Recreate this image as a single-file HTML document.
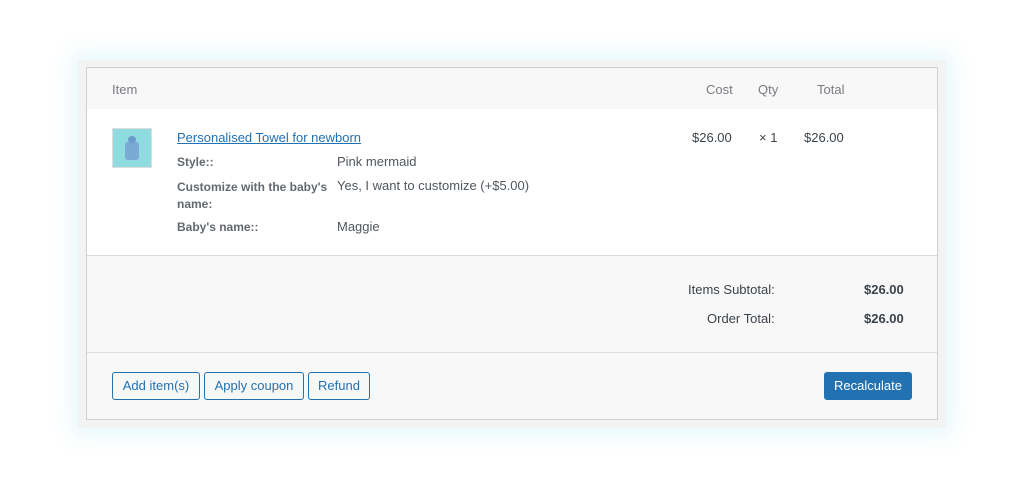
<!DOCTYPE html>
<html><head><style>
body{margin:0;width:1024px;height:494px;background:#fff;font-family:"Liberation Sans",Arial,sans-serif;position:relative;overflow:hidden;color:#50575e;font-size:13px}
.glow{position:absolute;left:78px;top:60px;width:868px;height:368px;background:#f3f3f3;box-shadow:0 0 22px 6px rgba(190,238,242,.4)}
.box{position:absolute;left:86px;top:67px;width:850px;height:351px;border:1px solid #d0d0d0;background:#f8f8f8}
.t{position:absolute;white-space:nowrap}
.white{position:absolute;left:0;top:41px;width:850px;height:146px;background:#fff;border-bottom:1px solid #dcdcde}
.line2{position:absolute;left:0;top:284px;width:850px;border-top:1px solid #dcdcde}
.btn{position:absolute;top:304px;height:26px;border:1px solid #2271b1;border-radius:3px;color:#2271b1;background:#f6f7f7;line-height:26px;text-align:center;font-size:13px;box-sizing:content-box}
b{color:#646970}
</style></head><body>
<div class="glow"></div>
<div class="box">
 <div class="t" style="left:25px;top:14px;color:#787c82">Item</div>
 <div class="t" style="left:619px;top:14px;color:#787c82">Cost</div>
 <div class="t" style="left:671px;top:14px;color:#787c82">Qty</div>
 <div class="t" style="left:730px;top:14px;color:#787c82">Total</div>
 <div class="white">
  <div style="position:absolute;left:25px;top:19px;width:38px;height:38px;background:#8edbe0;border:1px solid #ddd"><div style="position:absolute;left:12px;top:13px;width:14px;height:18px;background:#7aa9d6;border-radius:3px"></div><div style="position:absolute;left:15px;top:7px;width:8px;height:7px;background:#6b9ac8;border-radius:50%"></div></div>
  <div class="t" style="left:90px;top:21px;color:#2271b1;text-decoration:underline">Personalised Towel for newborn</div>
  <div class="t" style="left:90px;top:46px;font-size:12px"><b>Style::</b></div>
  <div class="t" style="left:250px;top:45px">Pink mermaid</div>
  <div class="t" style="left:90px;top:70px;font-size:12px;line-height:17px"><b>Customize with the baby's<br>name:</b></div>
  <div class="t" style="left:250px;top:69px">Yes, I want to customize (+$5.00)</div>
  <div class="t" style="left:90px;top:111px;font-size:12px"><b>Baby's name::</b></div>
  <div class="t" style="left:250px;top:110px">Maggie</div>
  <div class="t" style="left:605px;top:21px;color:#3c434a">$26.00</div>
  <div class="t" style="left:672px;top:21px;color:#3c434a">× 1</div>
  <div class="t" style="left:717px;top:21px;color:#3c434a">$26.00</div>
 </div>
 <div class="t" style="left:601px;top:214px;color:#3c434a">Items Subtotal:</div>
 <div class="t" style="left:620px;top:243px;color:#3c434a">Order Total:</div>
 <div class="t" style="left:777px;top:214px;color:#3c434a;font-weight:bold">$26.00</div>
 <div class="t" style="left:777px;top:243px;color:#3c434a;font-weight:bold">$26.00</div>
 <div class="line2"></div>
 <div class="btn" style="left:25px;width:86px">Add item(s)</div>
 <div class="btn" style="left:117px;width:98px">Apply coupon</div>
 <div class="btn" style="left:221px;width:60px">Refund</div>
 <div class="btn" style="left:737px;width:86px;background:#2271b1;color:#fff">Recalculate</div>
</div>
</body></html>
